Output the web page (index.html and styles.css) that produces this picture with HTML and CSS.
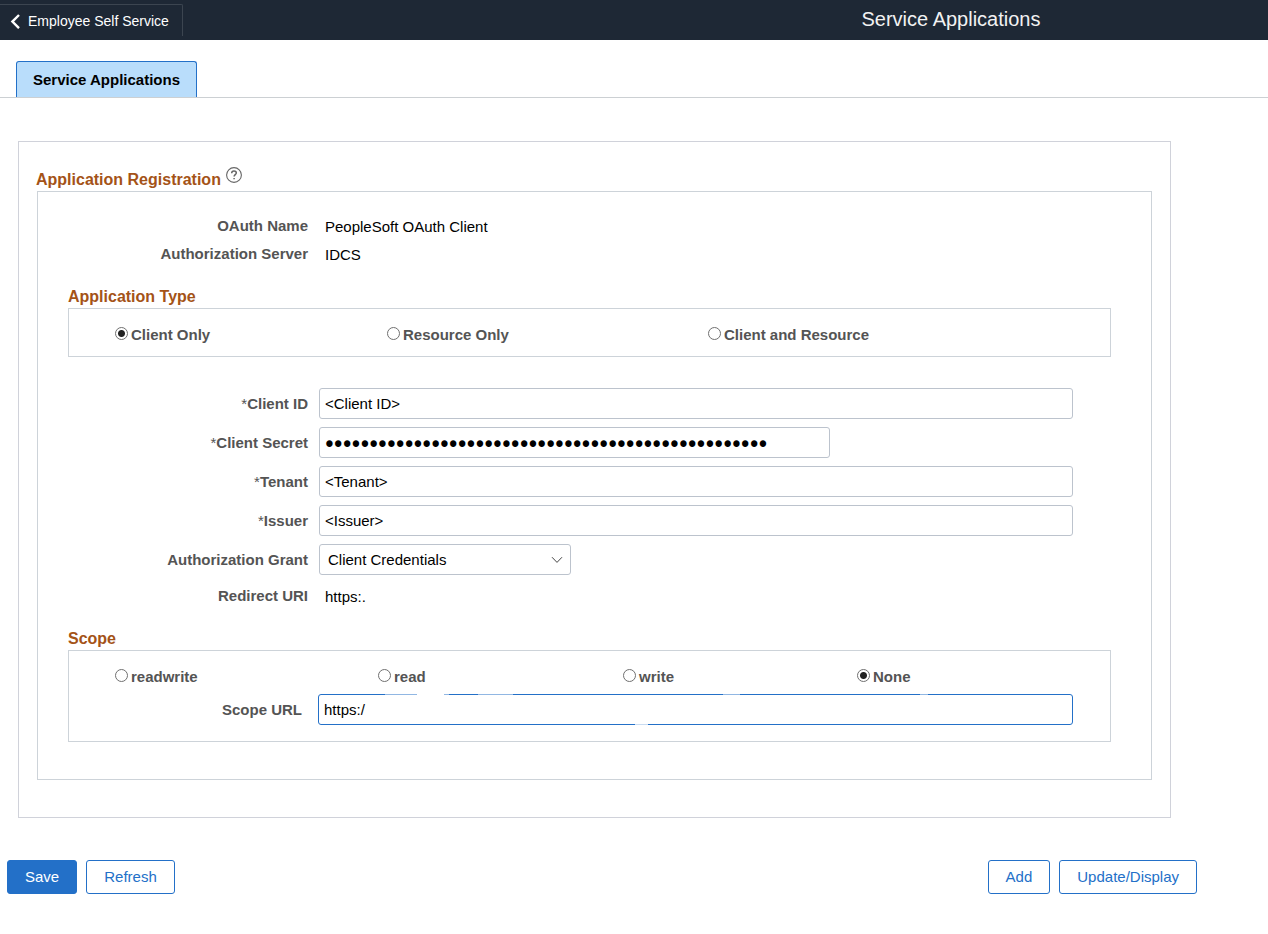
FILE: index.html
```html
<!DOCTYPE html>
<html lang="en">
<head>
<meta charset="utf-8">
<title>Service Applications</title>
<link rel="stylesheet" href="styles.css">
</head>
<body>
<header class="banner">
  <nav class="banner-side">
    <a class="back" href="#">
      <svg class="back-icon" viewBox="0 0 10 16" aria-hidden="true"><path d="M9 2 2.4 8.6 9 15.2"/></svg>
      Employee Self Service
    </a>
  </nav>
  <h1 class="banner-title">Service Applications</h1>
</header>
<nav class="tabs"><a class="tab" href="#">Service Applications</a></nav>
<main>
  <form class="page">
    <section class="outer">
      <div class="heading-row">
        <h2 class="heading">Application Registration</h2>
        <button class="help" type="button" aria-label="Help">
          <svg viewBox="0 0 16 16" aria-hidden="true"><circle cx="8" cy="8" r="7.4"/><path class="mark" d="M5.7 6.2C5.7 4.8 6.7 4 8 4s2.3.8 2.3 2c0 1.6-2.2 1.7-2.2 3.5"/><path class="mark" d="M8.1 10.9v1.4"/></svg>
        </button>
      </div>
      <div class="inner">
        <dl class="facts">
          <dt class="label">OAuth Name</dt><dd class="value">PeopleSoft OAuth Client</dd>
          <dt class="label">Authorization Server</dt><dd class="value">IDCS</dd>
        </dl>
        <h3 class="heading group-heading" id="type-heading">Application Type</h3>
        <div class="box type-box" role="radiogroup" aria-labelledby="type-heading">
          <label class="choice"><input class="radio" type="radio" name="type" checked>Client Only</label>
          <label class="choice"><input class="radio" type="radio" name="type">Resource Only</label>
          <label class="choice"><input class="radio" type="radio" name="type">Client and Resource</label>
        </div>
        <div class="fields">
          <label class="label" for="client-id"><span class="star">*</span>Client ID</label>
          <input class="input" id="client-id" type="text" value="&lt;Client ID&gt;">
          <label class="label" for="secret"><span class="star">*</span>Client Secret</label>
          <input class="input secret" id="secret" type="password" value="00000000000000000000000000000000000000000000000000">
          <label class="label" for="tenant"><span class="star">*</span>Tenant</label>
          <input class="input" id="tenant" type="text" value="&lt;Tenant&gt;">
          <label class="label" for="issuer"><span class="star">*</span>Issuer</label>
          <input class="input" id="issuer" type="text" value="&lt;Issuer&gt;">
          <label class="label" for="grant">Authorization Grant</label>
          <div class="select-wrap">
            <select class="input select" id="grant"><option>Client Credentials</option></select>
            <svg class="chevron" viewBox="0 0 12 8" aria-hidden="true"><path d="M1 1.2 6 6.4l5-5.2"/></svg>
          </div>
        </div>
        <dl class="facts redirect">
          <dt class="label">Redirect URI</dt><dd class="value">https:.</dd>
        </dl>
        <h3 class="heading group-heading" id="scope-heading">Scope</h3>
        <div class="box scope-box">
          <div class="scope-choices" role="radiogroup" aria-labelledby="scope-heading">
            <label class="choice"><input class="radio" type="radio" name="scope">readwrite</label>
            <label class="choice"><input class="radio" type="radio" name="scope">read</label>
            <label class="choice"><input class="radio" type="radio" name="scope">write</label>
            <label class="choice"><input class="radio" type="radio" name="scope" checked>None</label>
          </div>
          <div class="scope-url">
            <label class="label" for="scope-url">Scope URL</label>
            <div class="scope-field"><input class="input active" id="scope-url" type="text" value="https:/"></div>
          </div>
        </div>
      </div>
    </section>
    <div class="actions">
      <button class="btn primary" type="button">Save</button>
      <button class="btn" type="button">Refresh</button>
      <button class="btn push" type="button">Add</button>
      <button class="btn" type="button">Update/Display</button>
    </div>
  </form>
</main>
</body>
</html>
```
FILE: styles.css
```css
* { box-sizing: border-box; }
body {
  margin: 0;
  background: #fff;
  color: #000;
  font: 15px/18px "Liberation Sans", Arial, sans-serif;
}
h1, h2, h3, dl, dd { margin: 0; }

.banner {
  display: grid;
  grid-template-columns: 1fr 1fr;
  height: 40px;
  padding-top: 4px;
  background: #1e2835;
}
.back {
  display: inline-flex;
  align-items: center;
  gap: 8px;
  height: 32px;
  padding: 1px 13px 0 10px;
  border: 1px solid #3c4550;
  border-width: 1px 1px 0 0;
  border-radius: 0 2px 0 0;
  color: #fff;
  font-size: 14px;
  text-decoration: none;
}
.back-icon { width: 10px; height: 16px; fill: none; stroke: #fff; stroke-width: 2.4; }
.banner-title {
  color: #f2f2f2;
  font-size: 20px;
  font-weight: 400;
  line-height: 30px;
  text-align: center;
}

.tabs {
  display: flex;
  padding: 21px 16px 0;
  border-bottom: 1px solid #ccd0d3;
}
.tab {
  height: 36px;
  padding: 0 16px;
  border: 1px solid #2370c8;
  border-bottom: 0;
  border-radius: 3px 3px 0 0;
  background: #b9ddfb;
  color: #000;
  font-weight: 700;
  line-height: 36px;
  text-decoration: none;
}

.outer {
  margin: 43px 97px 0 18px;
  padding: 25px 18px 37px;
  border: 1px solid #d0d2da;
}
.heading-row { display: flex; gap: 5px; height: 24px; }
.heading { color: #a45317; font-size: 16px; line-height: 18px; }
.heading-row .heading { margin: 4px 0 0 -1px; }
.help { width: 16px; height: 16px; padding: 0; border: 0; background: none; }
.help svg { display: block; fill: none; stroke: #666; stroke-width: 1.1; }
.help .mark { stroke-width: 1.5; }
.inner { padding: 20px 40px 37px 30px; border: 1px solid #cdd3d9; }

.label { color: #545454; font-weight: 700; text-align: right; }
.star { font-weight: 400; }
.facts {
  display: grid;
  grid-template-columns: 240px 1fr;
  column-gap: 17px;
  grid-auto-rows: 28px;
  line-height: 28px;
}
.value { padding-top: 1px; }
.group-heading { margin: 20px 0 2px; }
.box { border: 1px solid #cdd3d9; }
.type-box {
  display: grid;
  grid-template-columns: 272fr 321fr 402fr;
  padding: 11px 0 11px 46px;
}
.choice {
  display: flex;
  align-items: center;
  gap: 3px;
  height: 25px;
  padding-top: 4px;
  color: #545454;
  font-weight: 700;
}
.radio {
  appearance: none;
  width: 13px;
  height: 13px;
  margin: 0 0 3px;
  border: 1px solid #707070;
  border-radius: 50%;
  background: #fff;
}
.radio:checked { background: radial-gradient(circle, #222 3px, #fff 4px); }

.fields {
  display: grid;
  grid-template-columns: 240px 1fr;
  gap: 8px 11px;
  align-items: center;
  margin: 31px 38px 7px 0;
}
.input {
  display: block;
  width: 100%;
  height: 31px;
  padding: 0 5px 1px;
  border: 1px solid #bcc3cd;
  border-radius: 3px;
  outline: 0;
  background: #fff;
  color: #000;
  font: 15px "Liberation Sans", Arial, sans-serif;
}
.secret {
  width: 511px;
  padding: 4px 5px 0;
  font-family: "DejaVu Sans", sans-serif;
  -webkit-text-stroke: 2px #000;
}
.select-wrap { position: relative; width: 252px; }
.select { appearance: none; padding-left: 8px; }
.chevron {
  position: absolute;
  top: 12px;
  right: 8px;
  width: 12px;
  height: 8px;
  fill: none;
  stroke: #444;
  pointer-events: none;
}

.scope-box { padding: 10px 0 16px; }
.scope-choices {
  display: grid;
  grid-template-columns: 263fr 245fr 234fr 253fr;
  padding: 1px 0 7px 46px;
}
.scope-url {
  display: grid;
  grid-template-columns: 233px 1fr;
  gap: 16px;
  align-items: center;
  padding-right: 37px;
}
.scope-field { position: relative; }
.active { border-color: #2370c8; }
/* worn stretches along the top and bottom edges of the field */
.scope-field::after {
  content: "";
  position: absolute;
  inset: 0;
  pointer-events: none;
  background:
    linear-gradient(#91b7e3, #91b7e3) 67px 0 / 32px 1px,
    linear-gradient(#fff, #fff) 99px 0 / 27px 1px,
    linear-gradient(#91b7e3, #91b7e3) 126px 0 / 5px 1px,
    linear-gradient(#91b7e3, #91b7e3) 160px 0 / 35px 1px,
    linear-gradient(#91b7e3, #91b7e3) 405px 0 / 17px 1px,
    linear-gradient(#91b7e3, #91b7e3) 602px 0 / 8px 1px,
    linear-gradient(#c8dbf1, #c8dbf1) 317px 100% / 13px 1px;
  background-repeat: no-repeat;
}

.actions { display: flex; gap: 9px; margin: 42px 71px 40px 7px; }
.btn {
  height: 34px;
  padding: 0 17px 2px;
  border: 1px solid #2370c8;
  border-radius: 3px;
  background: #fff;
  color: #2370c8;
  font: 15px "Liberation Sans", Arial, sans-serif;
}
.primary { background: #2370c8; color: #fff; }
.push { margin-left: auto; }
```
